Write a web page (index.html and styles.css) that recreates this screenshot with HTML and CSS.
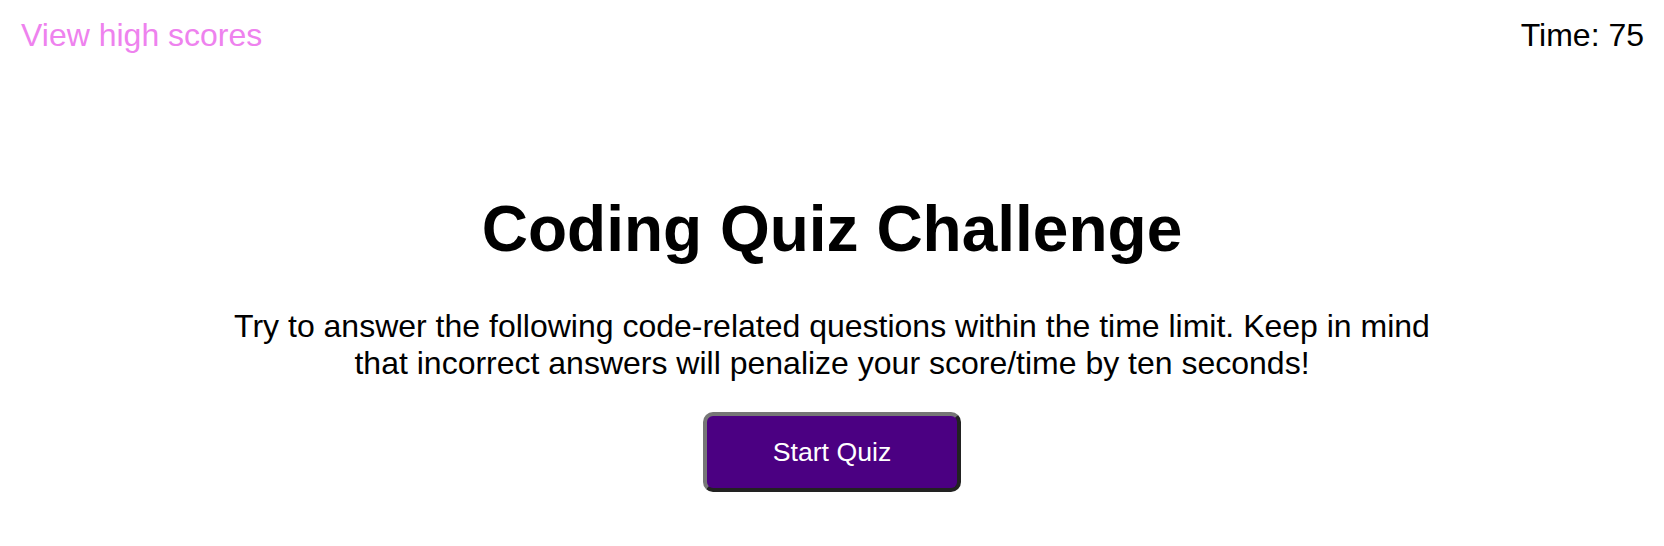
FILE: index.html
```html
<!DOCTYPE html>
<html lang="en">
<head>
<meta charset="utf-8">
<title>Coding Quiz Challenge</title>
<link rel="stylesheet" href="styles.css">
</head>
<body>
<header class="topbar">
  <a class="scores-link" href="#">View high scores</a>
  <div class="timer">Time: 75</div>
</header>
<main class="intro">
  <h1 class="title">Coding Quiz Challenge</h1>
  <p class="lead">Try to answer the following code-related questions within the time limit. Keep in mind that incorrect answers will penalize your score/time by ten seconds!</p>
  <button class="start-btn" type="button">Start Quiz</button>
</main>
</body>
</html>
```

FILE: styles.css
```css
html, body {
  margin: 0;
  padding: 0;
  background: #ffffff;
}

body {
  font-family: "Liberation Sans", Arial, sans-serif;
  font-size: 32px;
  color: #000000;
}

.topbar {
  display: flex;
  justify-content: space-between;
  align-items: baseline;
  padding: 17px 20px 0 21px;
}

.scores-link {
  color: #ee82ee;
  text-decoration: none;
}

.timer {
  color: #000000;
}

.intro {
  display: flex;
  flex-direction: column;
  align-items: center;
  margin-top: 138px;
}

.title {
  margin: 0;
  font-size: 64px;
  font-weight: bold;
  line-height: normal;
}

.lead {
  margin: 42px 0 0;
  max-width: 1230px;
  text-align: center;
  line-height: normal;
}

.start-btn {
  margin-top: 30px;
  width: 258px;
  height: 80px;
  box-sizing: border-box;
  background: #4b0082;
  color: #ffffff;
  font-family: "Liberation Sans", Arial, sans-serif;
  font-size: 26.67px;
  border-width: 4px;
  border-style: solid;
  border-color: #767676 #222222 #222222 #767676;
  border-radius: 10px;
  cursor: pointer;
}
```
